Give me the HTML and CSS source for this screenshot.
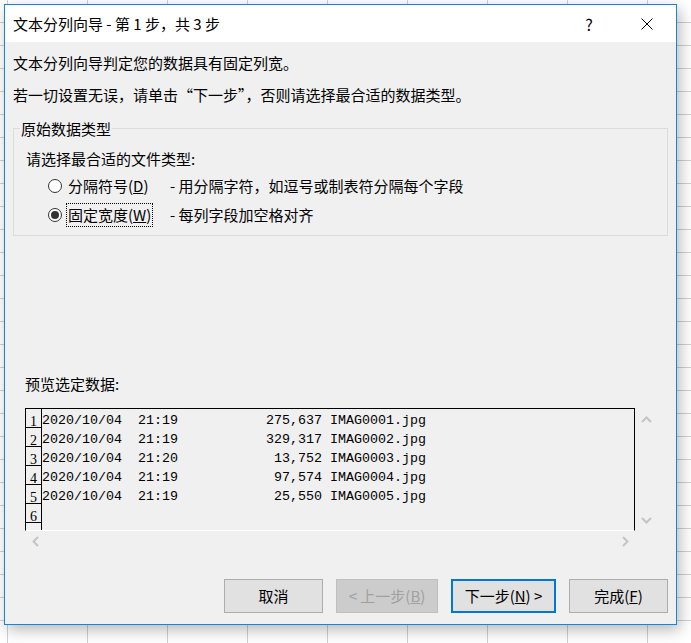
FILE: index.html
```html
<!DOCTYPE html>
<html lang="zh-CN">
<head>
<meta charset="utf-8">
<title>文本分列向导</title>
<link rel="stylesheet" href="styles.css">
</head>
<body>
<div class="dialog">
  <div class="titlebar">
    <span class="title">文本分列向导 - 第 1 步，共 3 步</span>
    <span class="help">?</span>
    <span class="close">
      <svg width="12" height="12" viewBox="0 0 12 12"><path d="M0.5 0.5 L11.5 11.5 M11.5 0.5 L0.5 11.5" stroke="#000" stroke-width="1" fill="none"/></svg>
    </span>
  </div>
  <div class="content">
    <p class="line">文本分列向导判定您的数据具有固定列宽。</p>
    <p class="line line-2">若一切设置无误，请单击“下一步”，否则请选择最合适的数据类型。</p>

    <div class="group">
      <span class="legend">原始数据类型</span>
      <p class="prompt">请选择最合适的文件类型:</p>
      <div class="opt">
        <span class="radio"></span>
        <span class="opt-label"><span class="focus">分隔符号(<u>D</u>)</span></span>
        <span class="desc">- 用分隔字符，如逗号或制表符分隔每个字段</span>
      </div>
      <div class="opt opt-2">
        <span class="radio radio-on"></span>
        <span class="opt-label"><span class="focus focus-on">固定宽度(<u>W</u>)</span></span>
        <span class="desc">- 每列字段加空格对齐</span>
      </div>
    </div>

    <p class="preview-label">预览选定数据:</p>
    <div class="preview">
      <div class="pv-main">
        <div class="grid">
          <div class="row"><span class="num">1</span><span class="txt">2020/10/04  21:19           275,637 IMAG0001.jpg</span></div>
          <div class="row"><span class="num">2</span><span class="txt">2020/10/04  21:19           329,317 IMAG0002.jpg</span></div>
          <div class="row"><span class="num">3</span><span class="txt">2020/10/04  21:20            13,752 IMAG0003.jpg</span></div>
          <div class="row"><span class="num">4</span><span class="txt">2020/10/04  21:19            97,574 IMAG0004.jpg</span></div>
          <div class="row"><span class="num">5</span><span class="txt">2020/10/04  21:19            25,550 IMAG0005.jpg</span></div>
          <div class="row"><span class="num">6</span><span class="txt"></span></div>
          <div class="row"><span class="num"></span><span class="txt"></span></div>
        </div>
        <div class="vscroll">
          <span class="sbtn sbtn-v"><svg width="11" height="7" viewBox="0 0 11 7"><polyline points="1,6 5.5,1.5 10,6" fill="none" stroke="#c4c4c4" stroke-width="2"/></svg></span>
          <span class="sbtn sbtn-v"><svg width="11" height="7" viewBox="0 0 11 7"><polyline points="1,1 5.5,5.5 10,1" fill="none" stroke="#c4c4c4" stroke-width="2"/></svg></span>
        </div>
      </div>
      <div class="hscroll">
        <span class="sbtn sbtn-h"><svg width="7" height="11" viewBox="0 0 7 11"><polyline points="6,1 1.5,5.5 6,10" fill="none" stroke="#c4c4c4" stroke-width="2"/></svg></span>
        <span class="sbtn sbtn-h"><svg width="7" height="11" viewBox="0 0 7 11"><polyline points="1,1 5.5,5.5 1,10" fill="none" stroke="#c4c4c4" stroke-width="2"/></svg></span>
      </div>
    </div>

    <div class="buttons">
      <button class="btn btn-cancel" type="button">取消</button>
      <button class="btn btn-prev" type="button" disabled>&lt; 上一步(<u>B</u>)</button>
      <button class="btn btn-next" type="button">下一步(<u>N</u>) &gt;</button>
      <button class="btn btn-finish" type="button">完成(<u>F</u>)</button>
    </div>
  </div>
</div>
</body>
</html>
```

FILE: styles.css
```css
* { box-sizing: border-box; }

html, body { margin: 0; padding: 0; }

body {
  width: 691px;
  height: 643px;
  overflow: hidden;
  padding: 4px 0 0 4px;
  background-color: #ffffff;
  background-image:
    linear-gradient(to right, #d0d0d0 1px, transparent 1px),
    linear-gradient(to bottom, #d0d0d0 1px, transparent 1px);
  background-size: 80px 23px;
  background-position: 7px 22px;
  font-family: "Noto Sans CJK SC", "Microsoft YaHei", sans-serif;
  font-size: 15px;
  color: #000;
}

.dialog {
  width: 673px;
  height: 621px;
  border: 1px solid #1883d7;
  background: #f0f0f0;
  box-shadow: 3px 5px 14px rgba(0, 0, 0, 0.28);
  display: flex;
  flex-direction: column;
}

.titlebar {
  height: 37px;
  flex: none;
  background: #fff;
  display: flex;
  align-items: center;
  padding: 0 6px 0 8px;
}

.title { line-height: 20px; }

.help {
  margin-left: auto;
  width: 46px;
  text-align: center;
  line-height: 20px;
  font-size: 16px;
}

.close {
  margin-left: 12px;
  width: 46px;
  display: flex;
  justify-content: center;
}

.content {
  flex: 1;
  padding: 11px 8px 0;
}

p { margin: 0; line-height: 20px; }

.line-2 { margin-top: 12px; }

.group {
  position: relative;
  margin-top: 23px;
  height: 108px;
  border: 1px solid #dcdcdc;
  padding: 20px 0 8px 12px;
}

.legend {
  position: absolute;
  top: -10px;
  left: 6px;
  padding: 0 1px;
  line-height: 20px;
  background: #f0f0f0;
}

.prompt { line-height: 20px; }

.opt {
  display: flex;
  align-items: center;
  height: 24px;
  margin-top: 5px;
  padding-left: 22px;
}

.radio {
  width: 14px;
  height: 14px;
  border: 1px solid #333;
  border-radius: 50%;
  background: #fff;
  margin-right: 4px;
  display: flex;
  align-items: center;
  justify-content: center;
  flex: none;
}

.radio-on::after {
  content: "";
  width: 8px;
  height: 8px;
  border-radius: 50%;
  background: #333;
}

.opt-label {
  width: 104px;
  flex: none;
  display: flex;
}

.focus {
  height: 24px;
  line-height: 22px;
  padding: 0 1px;
  border: 1px dotted transparent;
}

.focus-on { border-color: #000; }

.desc { line-height: 20px; }

.preview-label {
  margin: 138px 0 0 12px;
}

.preview {
  margin: 14px 0 0 12px;
  width: 632px;
}

.pv-main { display: flex; }

.grid {
  width: 610px;
  height: 123px;
  border: 1px solid #000;
  border-bottom-color: #fff;
  overflow: hidden;
  display: flex;
  flex-direction: column;
}

.row {
  display: flex;
  height: 19px;
  flex: none;
}

.num {
  width: 16px;
  height: 19px;
  flex: none;
  border-right: 1px solid #000;
  border-bottom: 1px solid #000;
  text-align: center;
  font-family: "Liberation Serif", serif;
  font-size: 14px;
  padding-top: 7px;
  line-height: 11px;
}

.txt {
  flex: 1;
  white-space: pre;
  font-family: "Liberation Mono", monospace;
  font-size: 13.333px;
  padding-top: 5px;
  line-height: 14px;
}

.vscroll {
  width: 22px;
  height: 123px;
  display: flex;
  flex-direction: column;
  justify-content: space-between;
}

.sbtn {
  display: flex;
  align-items: center;
  justify-content: center;
}

.sbtn-v { height: 22px; width: 22px; }

.hscroll {
  width: 610px;
  height: 20px;
  display: flex;
  justify-content: space-between;
}

.sbtn-h { width: 20px; height: 20px; }

.buttons {
  margin-top: 28px;
  display: flex;
  justify-content: flex-end;
  gap: 13px;
}

.btn {
  height: 34px;
  border: 1px solid #adadad;
  background: #e1e1e1;
  font-family: inherit;
  font-size: 15px;
  color: #000;
  padding: 0;
  display: flex;
  align-items: center;
  justify-content: center;
  line-height: 20px;
}

.btn-cancel { width: 99px; }
.btn-prev {
  width: 102px;
  background: #cccccc;
  border-color: #bfbfbf;
  color: #a0a0a0;
}
.btn-next {
  width: 105px;
  border: 2px solid #0078d7;
}
.btn-finish { width: 99px; }
```
